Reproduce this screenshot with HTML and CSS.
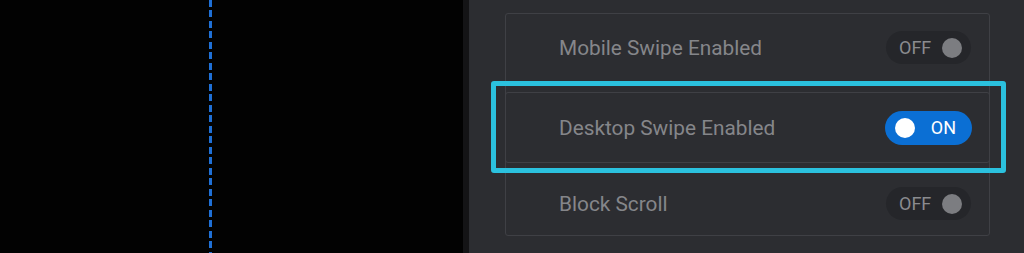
FILE: index.html
```html
<!DOCTYPE html>
<html>
<head>
<meta charset="utf-8">
<link rel="stylesheet" href="styles.css">
</head>
<body>
<div class="page">
  <div class="canvas">
    <div class="guide"></div>
  </div>
  <div class="panel">
    <div class="group">
      <div class="row row-first">
        <span class="label">Mobile Swipe Enabled</span>
        <span class="toggle off"><span class="tlabel">OFF</span><span class="knob"></span></span>
      </div>
      <div class="row row-active">
        <div class="highlight"></div>
        <span class="label">Desktop Swipe Enabled</span>
        <span class="toggle on"><span class="knob"></span><span class="tlabel">ON</span></span>
      </div>
      <div class="row row-last">
        <span class="label">Block Scroll</span>
        <span class="toggle off"><span class="tlabel">OFF</span><span class="knob"></span></span>
      </div>
    </div>
  </div>
</div>
</body>
</html>
```

FILE: styles.css
```css
html, body {
  margin: 0;
  padding: 0;
  background: #000;
  width: 1024px;
  height: 253px;
  overflow: hidden;
}

.page {
  display: flex;
  width: 1024px;
  height: 253px;
  font-family: Roboto, "Liberation Sans", sans-serif;
}

.canvas {
  width: 463px;
  flex: none;
  height: 100%;
  background: #020202;
}

.guide {
  margin-left: 209px;
  width: 3px;
  height: 100%;
  background: repeating-linear-gradient(to bottom, #1f70d6 0 7px, transparent 7px 10.5px);
}

.panel {
  flex: 1;
  height: 100%;
  background: #2c2d31;
  border-left: 6px solid #141416;
  padding: 13px 34px 0 36px;
  box-sizing: border-box;
}

.group {
  border: 1px solid #3f4045;
  border-radius: 3px;
  height: 223px;
  box-sizing: border-box;
  display: flex;
  flex-direction: column;
}

.row {
  display: flex;
  align-items: center;
  justify-content: space-between;
  padding: 0 18px 0 53px;
  box-sizing: border-box;
  position: relative;
}

.row-first {
  height: 67px;
}

.row-active {
  margin: 11px -1px 0 -1px;
  height: 71px;
  border: 1px solid #3f4045;
  border-radius: 3px;
  padding: 0 17px 0 53px;
}

.row-last {
  margin-top: 9px;
  height: 63px;
}

.highlight {
  position: absolute;
  left: -15px;
  right: -17px;
  top: -12px;
  bottom: -11px;
  border: 5px solid #2bc1de;
  border-radius: 3px;
  pointer-events: none;
}

.label {
  color: #85868a;
  font-size: 20.8px;
  letter-spacing: 0;
}

.toggle {
  display: flex;
  align-items: center;
  height: 33px;
  width: 85px;
  border-radius: 17px;
  box-sizing: border-box;
  font-size: 18px;
}

.toggle.off {
  background: #25262a;
  padding: 0 9px 0 13px;
  justify-content: space-between;
  color: #8a8b8f;
}

.toggle.off .knob {
  background: #7c7d81;
}

.toggle.on {
  background: #0b6fd4;
  width: 87px;
  height: 34px;
  padding: 0 16px 0 10px;
  justify-content: space-between;
  color: #fff;
}

.toggle.on .knob {
  background: #fff;
}

.knob {
  width: 20px;
  height: 20px;
  border-radius: 50%;
  display: block;
}

.tlabel {
  line-height: 1;
}
```
